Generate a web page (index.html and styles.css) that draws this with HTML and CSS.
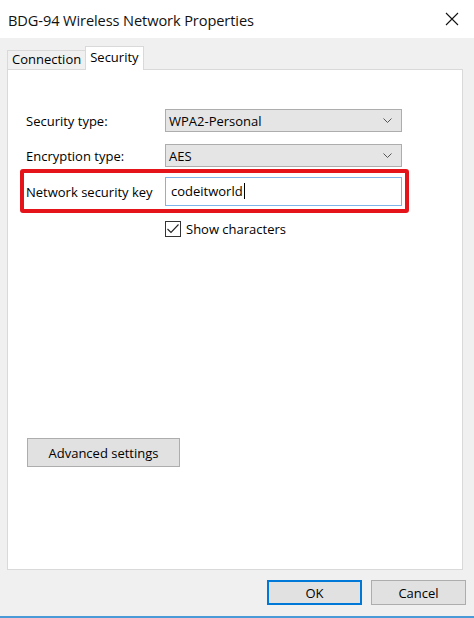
FILE: index.html
```html
<!DOCTYPE html>
<html>
<head>
<meta charset="utf-8">
<link rel="stylesheet" href="styles.css">
</head>
<body>
<div class="window">
  <div class="titlebar">
    <span class="title">BDG-94 Wireless Network Properties</span>
    <svg class="close" width="14" height="14" viewBox="0 0 14 14"><path d="M1 1L13 13M13 1L1 13" stroke="#111" stroke-width="1.1" fill="none"/></svg>
  </div>
  <div class="content">
    <div class="tabs">
      <div class="tab">Connection</div>
      <div class="tab active">Security</div>
    </div>
    <div class="panel">
      <div class="row">
        <span class="label">Security type:</span>
        <div class="select"><span>WPA2-Personal</span><svg width="9" height="5" viewBox="0 0 9 5"><path d="M0.5 0.5L4.5 4.5L8.5 0.5" stroke="#555" stroke-width="1" fill="none"/></svg></div>
      </div>
      <div class="row row-gap">
        <span class="label">Encryption type:</span>
        <div class="select"><span>AES</span><svg width="9" height="5" viewBox="0 0 9 5"><path d="M0.5 0.5L4.5 4.5L8.5 0.5" stroke="#555" stroke-width="1" fill="none"/></svg></div>
      </div>
      <div class="highlight">
        <span class="label">Network security key</span>
        <div class="input"><span>codeitworld</span><span class="caret"></span></div>
      </div>
      <div class="check-row">
        <span class="checkbox"><svg width="14" height="14" viewBox="0 0 14 14"><path d="M1.5 7L5 10.5L12.5 2.5" stroke="#222" stroke-width="1.1" fill="none"/></svg></span>
        <span>Show characters</span>
      </div>
      <div class="adv-row">
        <button class="btn adv">Advanced settings</button>
      </div>
    </div>
    <div class="footer">
      <button class="btn ok">OK</button>
      <button class="btn cancel">Cancel</button>
    </div>
  </div>
</div>
</body>
</html>
```
FILE: styles.css
```css
* { box-sizing: border-box; }
html, body { margin: 0; padding: 0; }
body {
  width: 474px;
  height: 618px;
  overflow: hidden;
  font-family: "Open Sans", "Noto Sans", sans-serif;
  font-size: 13px;
  color: #000;
}
.window {
  height: 618px;
  display: flex;
  flex-direction: column;
  background: #f0f0f0;
  border-bottom: 2px solid #4a9ad8;
}
.titlebar {
  height: 38px;
  background: #fff;
  display: flex;
  align-items: center;
  justify-content: space-between;
  padding: 0 15px 0 8px;
}
.title {
  font-size: 14.6px;
  color: #111;
  letter-spacing: -0.1px;
  margin-top: 1px;
}
.content {
  flex: 1;
  display: flex;
  flex-direction: column;
  padding: 8px 11px 0 7px;
}
.tabs {
  display: flex;
  align-items: flex-end;
  height: 23px;
  padding-left: 0;
}
.tab {
  height: 19px;
  padding: 0 4px;
  border: 1px solid #d9d9d9;
  border-bottom: none;
  background: #f0f0f0;
  line-height: 17px;
  margin-right: -1px;
}
.tab.active {
  height: 24px;
  background: #fff;
  position: relative;
  z-index: 1;
  margin-bottom: -1px;
  line-height: 20px;
  padding: 0 4px;
}
.panel {
  height: 501px;
  background: #fff;
  border: 1px solid #d9d9d9;
  display: flex;
  flex-direction: column;
  padding: 39px 0 0 18px;
}
.row {
  display: flex;
  align-items: center;
  height: 23px;
}
.row-gap { margin-top: 12px; }
.label { width: 139px; flex: none; }
.select {
  width: 237px;
  height: 23px;
  background: #e5e5e5;
  border: 1px solid #adadad;
  display: flex;
  align-items: center;
  justify-content: space-between;
  padding: 0 9px 0 3px;
}
.highlight {
  margin-top: 2px;
  margin-left: -6px;
  width: 389px;
  height: 44px;
  border: 4px solid #e5131a;
  border-radius: 3px;
  display: flex;
  align-items: center;
  padding: 1px 0 0 2px;
}
.input {
  width: 237px;
  height: 29px;
  border: 1px solid #7eb4ea;
  display: flex;
  align-items: center;
  padding: 0 0 2px 5px;
}
.caret {
  width: 1px;
  height: 16px;
  background: #000;
  margin-left: 1px;
}
.check-row {
  display: flex;
  align-items: center;
  margin-top: 8px;
  padding-left: 139px;
  height: 16px;
}
.checkbox {
  width: 16px;
  height: 16px;
  border: 1px solid #333;
  display: flex;
  align-items: center;
  justify-content: center;
  margin-right: 5px;
}
.adv-row { margin-top: 201px; padding-left: 1px; }
.btn {
  font-family: inherit;
  font-size: 13px;
  color: #000;
  background: #e1e1e1;
  border: 1px solid #adadad;
  padding: 0;
  margin: 0;
}
.adv { width: 153px; height: 29px; }
.footer {
  display: flex;
  justify-content: flex-end;
  gap: 9px;
  padding: 10px 0 0 0;
  margin-right: -3px;
}
.ok, .cancel { width: 95px; height: 25px; }
.ok { border: 1px solid #0078d7; box-shadow: inset 0 0 0 1px #0078d7; }
```
